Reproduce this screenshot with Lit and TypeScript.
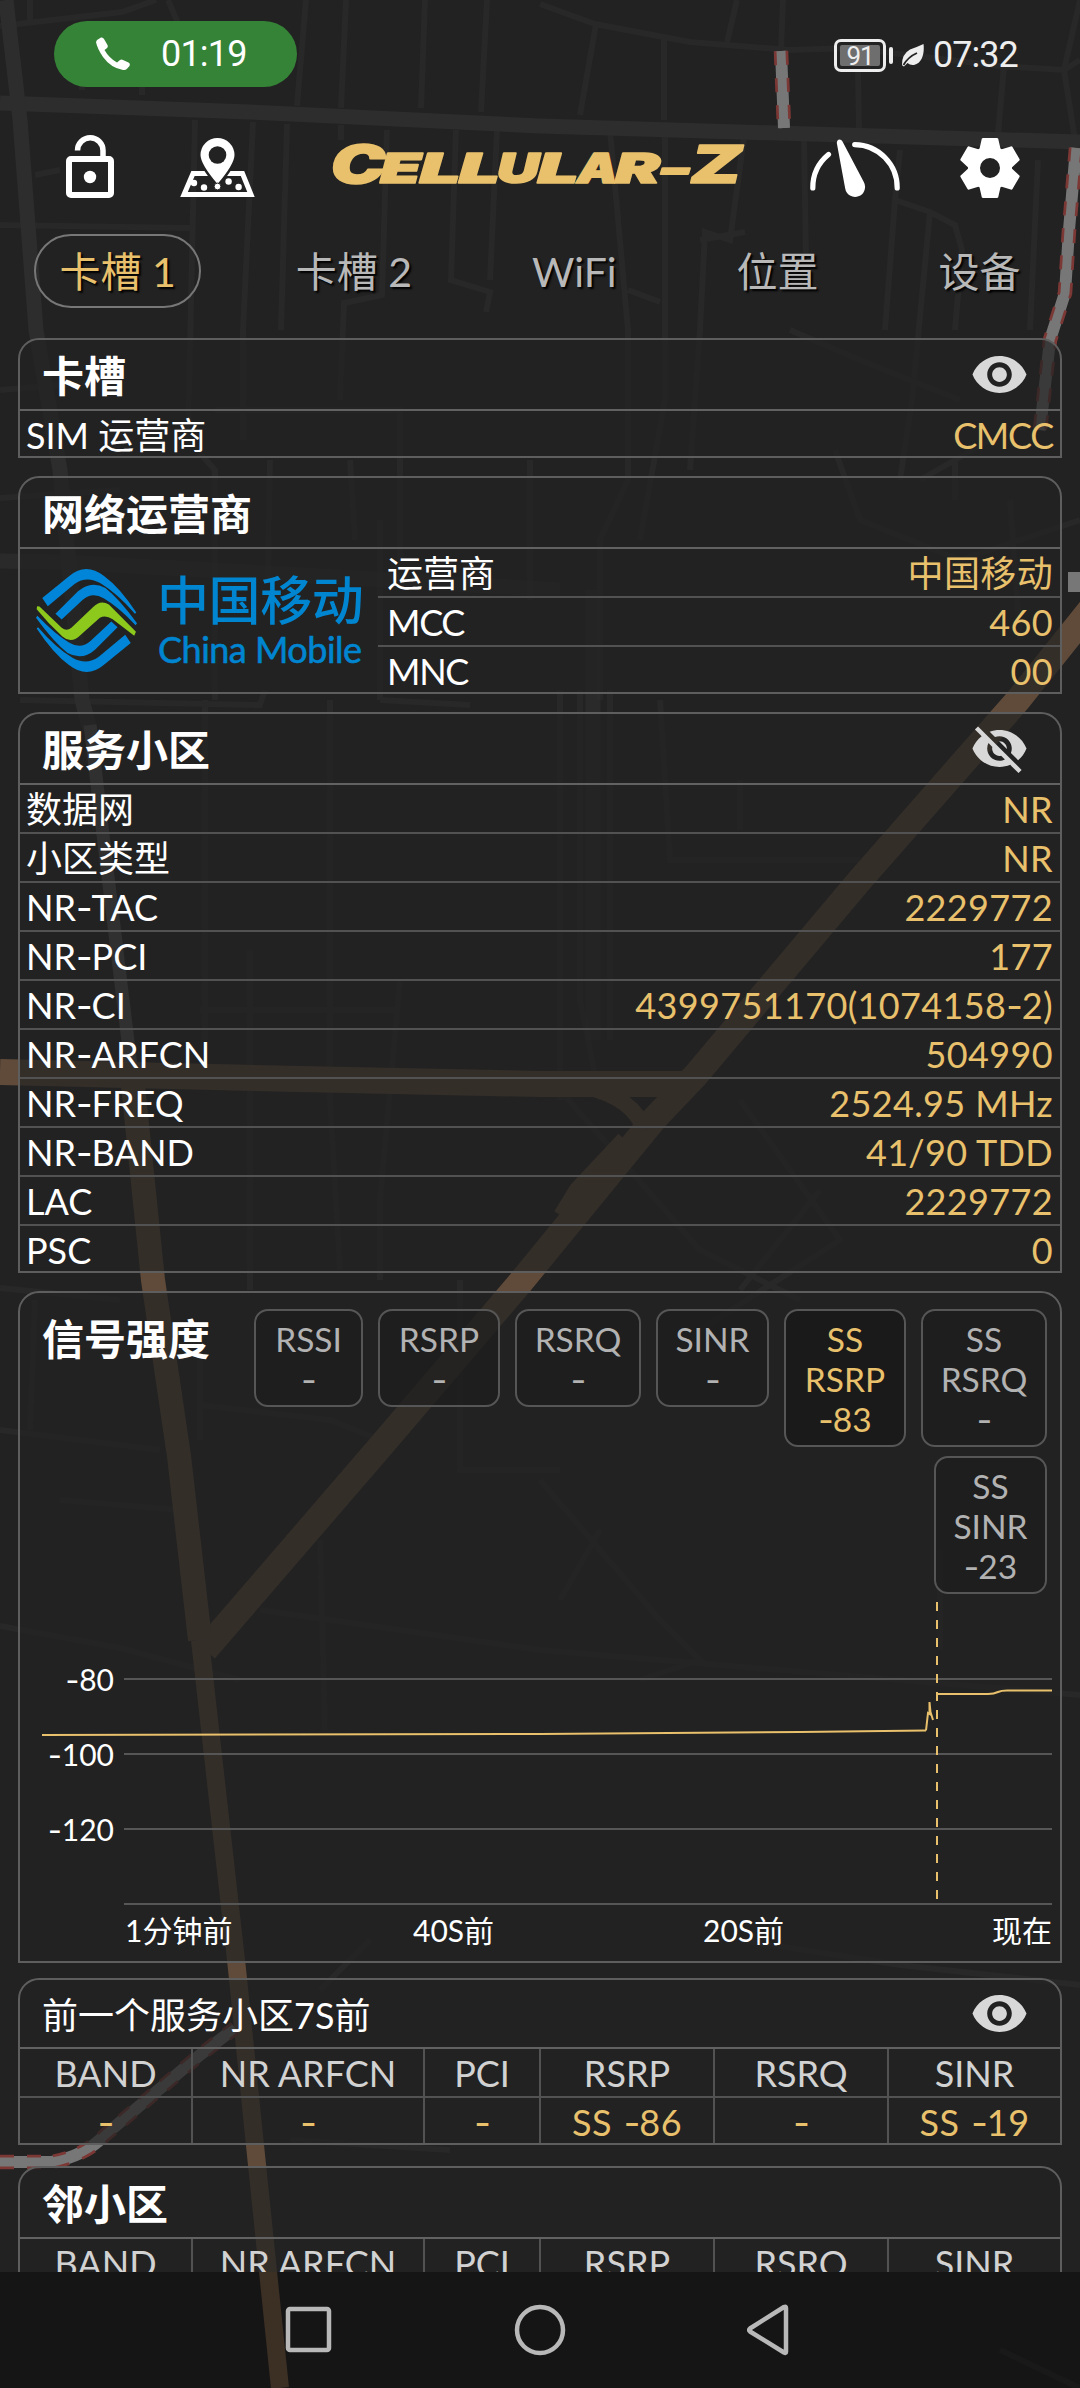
import { LitElement, html, svg, css, nothing } from 'lit';
import { customElement, property } from 'lit/decorators.js';
import { classMap } from 'lit/directives/class-map.js';
import { styleMap } from 'lit/directives/style-map.js';

const EYE = svg`<path d="M12 4.5C7 4.5 2.73 7.61 1 12c1.73 4.39 6 7.5 11 7.5s9.27-3.11 11-7.5c-1.73-4.39-6-7.5-11-7.5zM12 17c-2.76 0-5-2.24-5-5s2.24-5 5-5 5 2.24 5 5-2.24 5-5 5zm0-8c-1.66 0-3 1.34-3 3s1.34 3 3 3 3-1.34 3-3-1.34-3-3-3z"/>`;
const EYE_OFF = svg`<path d="M12 7c2.76 0 5 2.24 5 5 0 .65-.13 1.26-.36 1.83l2.92 2.92c1.51-1.26 2.7-2.89 3.43-4.75-1.73-4.39-6-7.5-11-7.5-1.4 0-2.74.25-3.98.7l2.16 2.16C10.74 7.13 11.35 7 12 7zM2 4.27l2.28 2.28.46.46C3.08 8.3 1.78 10.02 1 12c1.73 4.39 6 7.5 11 7.5 1.55 0 3.03-.3 4.38-.84l.42.42L19.73 22 21 20.73 3.27 3 2 4.27zM7.53 9.8l1.55 1.55c-.05.21-.08.43-.08.65 0 1.66 1.34 3 3 3 .22 0 .44-.03.65-.08l1.55 1.55c-.67.33-1.41.53-2.2.53-2.76 0-5-2.24-5-5 0-.79.2-1.53.53-2.2zm4.31-.78l3.15 3.15.02-.16c0-1.66-1.34-3-3-3l-.17.01z"/>`;

/* Hyphens are set in a face whose dash is longer and sits at mid-cap height. */
const dashed = (t: string) => t.split(/(-)/).map((p) => (p === '-' ? html`<span class="hy">-</span>` : p));

const shared = css`
  * { box-sizing: border-box; }
  svg { display: block; flex: none; }
  .hy { font-family: 'Inter', sans-serif; letter-spacing: -1px; }
`;

@customElement('map-backdrop')
class MapBackdrop extends LitElement {
  static styles = css`
    :host { display: block; }
    svg { display: block; width: 1080px; height: 2388px; }
    .minor { stroke: #282828; stroke-width: 6; fill: none; }
    .street { stroke: #2d2d2d; stroke-width: 15; fill: none; }
    .major { stroke: #604b3a; fill: none; }
    .rail { stroke: #777; stroke-width: 12; fill: none; }
    .tick { stroke: #7c3835; stroke-width: 14.5; stroke-dasharray: 14 13; fill: none; }
  `;
  private rail(d: string) {
    return svg`<path class="rail" d=${d}/><path class="tick" d=${d}/><path class="rail" d=${d} stroke-opacity="1" style="stroke-width:9"/>`;
  }
  render() {
    return html`<svg viewBox="0 0 1080 2388" aria-hidden="true">
      <g class="minor">
        <path d="M0 26L122 12L156 0M30 0V20M168 0L180 28M306 0L297 106M346 0L341 108M425 0L421 108M487 0L481 112M82 90V70M142 95V40L180 30M195 120L188 440L215 470V700M253 122L243 330V440M287 124L281 330M387 130L382 295L344 303L340 400M456 130L451 280L490 292L486 312M497 130L490 280M341 125V140"/>
        <path d="M540 4L595 24L690 42L790 50L850 48L1000 66L1064 70L1080 60M596 24L580 115M737 0L727 42M783 0L781 50M664 38V120M858 70L859 130M1004 66L998 134M1064 70L1075 140M1080 0L1064 70M610 130L628 330V480L600 540V700M665 130V400L640 540M745 130L730 240L705 232L700 330L690 470M745 232L700 240M804 140L806 260M900 150L895 200L930 212L955 225L962 250L955 330M930 212L912 400L900 480M1038 160L1030 330M628 290L660 302M895 200L885 330"/>
        <path d="M0 225L190 228M35 175L60 170M0 390L120 380M215 410H400V560M270 460L268 580M350 460L355 540M530 460V600M0 498L120 490M380 520V700M20 700L260 705L265 690M380 700L470 705M580 690V1000L600 1100M560 690V1100M610 690V1040M660 700L670 860H860M740 780V830M205 700V1040M330 700V1100L340 1270M250 950V1290M400 980L380 1200V1280M200 1010H400M790 330L860 360L960 400M835 450L860 520L960 560L1080 520M920 480L990 440M955 460V500M1010 500L1020 640"/>
        <path d="M560 1090L700 1250L800 1300M740 1100L840 1240L700 1330M820 1190L740 1290M0 1288L120 1300M35 1300L30 1430M0 1430L160 1450M60 1500L180 1510M200 1405L330 1420L380 1440M200 1440V1340M0 1626L120 1648L240 1680M260 1610L540 1650L1080 1695M320 1540L325 1730M460 1280V1470H560M540 1480L660 1620L700 1660L640 1680M600 1530L560 1600M320 1990L370 1940M740 1940L900 1965L1080 1985M940 1550V1650M290 2140L450 2150M1000 2350L1080 2388"/>
      </g>
      <g class="street">
        <path d="M0 103L250 112L540 126L1080 142"/>
        <path d="M6 0L20 120L36 330L60 470L82 700L90 730"/>
        <path d="M0 561L60 562L300 575L560 590" stroke-opacity=".8"/>
        <path d="M593 590V1040" stroke-opacity=".7"/>
      </g>
      <path d="M90 725L106 860L131 1066" stroke="#555253" stroke-width="13" fill="none"/>
      <g class="major">
        <path d="M1090 610L1018 700L860 880L695 1076L655 1118L520 1283L380 1447L205 1650" stroke-width="26"/>
        <path d="M625 1140L578 1190L562 1216" stroke-width="18"/>
        <path d="M0 1072L300 1079L540 1084H690" stroke-width="26"/>
        <path d="M590 1088Q632 1098 645 1130" stroke-width="16"/>
        <path d="M131 1066L153 1280L179 1456L200 1640" stroke-width="24"/>
        <path d="M200 1640L237 1969L256 2155L280 2388" stroke-width="18"/>
      </g>
      ${this.rail('M781 51L784 128')}
      ${this.rail('M1076 148L1069 230L1065 293L1050 340L1040 430')}
      ${this.rail('M0 2162H52Q85 2156 105 2135L200 2055L235 2028')}
      <rect x="1068" y="572" width="12" height="20" fill="#777"/>
    </svg>`;
  }
}

@customElement('status-bar')
class StatusBar extends LitElement {
  static styles = [shared, css`
    :host { display: flex; justify-content: space-between; align-items: flex-start; height: 108px; padding: 21px 60px 0 54px; font: 36px/66px 'Roboto', sans-serif; color: #fff; }
    .call { display: flex; align-items: center; width: 243px; height: 66px; padding-left: 42px; gap: 31px; border-radius: 33px; background: #358336; line-height: 70px; letter-spacing: -0.8px; }
    .right { display: flex; align-items: center; height: 68px; color: #eee; }
    .battery { display: flex; align-items: center; gap: 3px; margin-right: 9px; }
    .cell { width: 52px; height: 33px; padding: 3px; border: 3px solid #eee; border-radius: 7px; }
    .fill { width: 40px; height: 21px; border-radius: 2px; background: #6e6e6e; font-size: 26px; line-height: 22px; text-align: center; letter-spacing: -1px; }
    .nub { width: 4px; height: 17px; border-radius: 2px; background: #eee; }
    .time { margin-left: 9px; line-height: 70px; width: 87px; letter-spacing: -1px; white-space: nowrap; }
  `];
  render() {
    return html`
      <div class="call">
        <svg width="34" height="34" viewBox="0 0 34 34" fill="#fff"><path d="M1 3L5 .5Q7 0 8 2L11.500 8Q12.500 10 10.500 11.500L8.500 13Q13 21 21 25.500L24 23Q25.500 22 27 23L32.500 25.500Q34.500 26.500 33.500 29L31 31.800Q29.500 33.500 27 33Q15 31 7 20Q1 11 0 5Z"/></svg>
        <span>01:19</span>
      </div>
      <div class="right">
        <div class="battery"><div class="cell"><div class="fill">91</div></div><div class="nub"></div></div>
        <svg width="22" height="23" viewBox="0 0 22 23"><path d="M21.500 0C22.500 8 21 19 12 21Q8 21.500 5.500 19L2 22.500Q0 22 0 20.500Q0 10 8 5.500Q14 3.500 21.500 0Z" fill="#eee"/><path d="M1.500 21Q6 13 15 9" stroke="#222" stroke-width="1.800" fill="none"/></svg>
        <span class="time">07:32</span>
      </div>`;
  }
}

/* Wordmark letters: character, x position, advance, large cap or small cap. */
const WORDMARK: [string, number, number, boolean][] = [
  ['C', 32, 163, true], ['E', 181, 122, false], ['L', 299, 122, false], ['L', 417, 122, false], ['U', 531, 126, false],
  ['L', 653, 122, false], ['A', 771, 122, false], ['R', 886, 134, false], ['-', 1010, 110, false], ['Z', 1112, 152, true],
];

@customElement('app-header')
class AppHeader extends LitElement {
  static styles = [shared, css`
    :host { display: flex; align-items: center; height: 120px; padding: 0 60px 0 66px; }
    .lock { margin-top: -3px; }
    .map { margin-left: 66px; }
    .logo { margin: -6px 50px 0 65px; }
    .logo text { font: italic 900 124px 'Inter', sans-serif; fill: #e9c16c; stroke: #e9c16c; stroke-width: 5; stroke-linejoin: round; }
    .big { font-size: 155px; }
    .gear { margin-left: 60px; }
  `];
  render() {
    return html`
      <svg class="lock" width="48" height="63" viewBox="0 0 48 63" fill="none" stroke="#fff"><rect x="3" y="24" width="42" height="36" rx="2" stroke-width="6"/><path d="M11.500 15.500A12.700 12.700 0 0 1 37 15.500V23" stroke-width="5.500"/><circle cx="24" cy="42" r="6.200" fill="#fff" stroke="none"/></svg>
      <svg class="map" width="75" height="60" viewBox="0 0 75 60"><path d="M13 35.500H62.500L71 56.500H4Z" fill="none" stroke="#fff" stroke-width="5"/><g fill="#fff"><circle cx="14" cy="45" r="3.200"/><circle cx="24" cy="49.500" r="3.200"/><circle cx="48.600" cy="43.500" r="3.200"/><circle cx="58.600" cy="49" r="3.200"/></g><path d="M37.500 0A17 17 0 0 1 54.500 17Q54.500 26 37.500 46Q20.500 26 20.500 17A17 17 0 0 1 37.500 0Z" fill="#fff" stroke="#222" stroke-width="5" paint-order="stroke"/><circle cx="37.500" cy="17" r="8.800" fill="#222"/><circle cx="37.500" cy="48.500" r="3.400" fill="#fff" stroke="#222" stroke-width="1"/></svg>
      <svg class="logo" width="440" height="90" viewBox="0 0 1320 270">
        <text y="189">${WORDMARK.map(([c, x, w, big]) => svg`<tspan class=${big ? 'big' : 'small'} x=${x} textLength=${w} lengthAdjust="spacingAndGlyphs">${c}</tspan>`)}</text>
      </svg>
      <svg width="90" height="58" viewBox="0 0 90 58"><g fill="none" stroke="#fff" stroke-width="5.200" stroke-linecap="round"><path d="M2.800 49A43 43 0 0 1 18.500 15.500"/><path d="M44.700 5.600A43 43 0 0 1 87.200 49"/></g><path d="M26.800 4Q27 .5 29.500 .4Q31.500 .5 32.500 2.500L53.800 43A10 10 0 1 1 35.200 49.500Z" fill="#fff"/></svg>
      <svg class="gear" width="60" height="60" viewBox="-30 -30 60 60" fill="#fff">
        ${[0, 60, 120, 180, 240, 300].map((a) => svg`<path transform="rotate(${a})" d="M-7 -30H7Q8.500 -30 8.500 -28L11 -17H-11L-8.500 -28Q-8.500 -30 -7 -30Z"/>`)}
        <circle r="16" fill="none" stroke="#fff" stroke-width="12"/>
      </svg>`;
  }
}

@customElement('tab-strip')
class TabStrip extends LitElement {
  @property({ type: Array }) tabs: string[] = [];
  static styles = [shared, css`
    :host { display: flex; justify-content: space-between; margin-top: 6px; padding: 0 34px; font: 41px/78px 'Lato', 'Noto Sans CJK SC', sans-serif; color: #b8b8b8; text-shadow: 2px 2px 2px #000; }
    .tab { height: 74px; padding: 0 23.5px; border: 2px solid transparent; border-radius: 37px; line-height: 72px; white-space: nowrap; }
    .on { color: #e9c16c; border-color: #777; }
  `];
  render() {
    return this.tabs.map((t, i) => html`<div class=${classMap({ tab: true, on: i === 0 })}>${t}</div>`);
  }
}

const card = css`
  :host { display: block; color: #fff; font: 36px/46px 'Lato', 'Noto Sans CJK SC', sans-serif; }
  .card { border: 2px solid #5e5e5e; border-radius: 21px 21px 0 0; background: rgba(34, 34, 34, 0.72); }
  .head { display: flex; align-items: center; justify-content: space-between; height: 69px; padding: 2px 31px 0 22px; font-size: 42px; font-weight: 700; line-height: 60px; }
  .head svg { fill: #d8d8d8; margin-top: -2px; }
  .row { display: flex; justify-content: space-between; height: 49px; padding: 1px 7px 0 6px; border-top: 2px solid #525252; white-space: nowrap; }
  .row:first-child { border-color: #626262; }
  .row:last-child { height: 47px; }
  .val { color: #e9c16c; letter-spacing: 0.35px; }
  .tight { letter-spacing: -1.3px; }
`;

const eye = (off = false) => html`<svg width="59" height="59" viewBox="0 0 24 24">${off ? EYE_OFF : EYE}</svg>`;

type Row = [string, string, boolean?];

@customElement('info-card')
class InfoCard extends LitElement {
  @property() heading = '';
  @property() toggle = '';
  @property({ type: Array }) rows: Row[] = [];
  @property({ type: Boolean }) carrier = false;
  static styles = [shared, card, css`
    .body { display: flex; }
    .rows { flex: 1; }
    .brand { display: flex; align-items: center; width: 358px; gap: 20px; padding-left: 16px; border-top: 2px solid #626262; color: #0085d0; }
    .names { display: flex; flex-direction: column; white-space: nowrap; }
    .cn { font: 500 52px/56px 'Noto Sans CJK SC', sans-serif; letter-spacing: -0.4px; }
    .en { font: 400 36px/44px 'Lato', sans-serif; margin-top: 1px; padding-left: 1px; letter-spacing: -0.5px; -webkit-text-stroke: 0.6px #0085d0; }
    .inset .row { padding-left: 9px; }
  `];
  render() {
    return html`<div class="card">
      <div class="head"><span>${this.heading}</span>${this.toggle ? eye(this.toggle === 'off') : nothing}</div>
      <div class="body">
        ${this.carrier ? html`<div class="brand">
          <svg width="101" height="103" viewBox="104 745 291 310" preserveAspectRatio="none">
            ${[0, 180].map((a) => svg`<g transform="rotate(${a} 249.500 900)" fill="#0085d8"><path d="M122 832L200 766Q248 724 300 766Q345 800 393 876L389 880Q340 820 290 788Q250 764 215 790L138 857Z"/><path d="M160 880L225 812Q262 778 304 802Q345 836 395 908L391 914Q340 858 300 834Q266 812 238 838L178 897Z"/></g>`)}
            <path d="M107 857L114 858L178 922Q192 934 206 922L268 860Q290 836 314 852L392 934L387 946L325 896Q304 882 288 892L234 942Q206 972 180 948Q140 910 106 866Z" fill="#8dc91c"/>
          </svg>
          <div class="names"><span class="cn">中国移动</span><span class="en">China Mobile</span></div>
        </div>` : nothing}
        <div class=${classMap({ rows: true, inset: this.carrier })}>
          ${this.rows.map(([k, v, t]) => html`<div class="row"><span class=${classMap({ tight: !!t })}>${dashed(k)}</span><span class=${classMap({ val: true, tight: v === 'CMCC' })}>${dashed(v)}</span></div>`)}
        </div>
      </div>
    </div>`;
  }
}

@customElement('signal-card')
class SignalCard extends LitElement {
  static styles = [shared, card, css`
    .top { display: flex; justify-content: space-between; align-items: flex-start; padding: 16px 13px 0 22px; }
    .title { font-size: 42px; font-weight: 700; line-height: 60px; }
    .chips { display: flex; flex-wrap: wrap; justify-content: flex-end; align-items: flex-start; gap: 9px 15px; width: 810px; }
    .chip { padding: 8px 0 5px; border: 2px solid #565656; border-radius: 14px; background: rgba(28, 28, 28, 0.6); color: #b2b2b2; font-size: 33.5px; line-height: 40px; text-align: center; }
    .on { color: #e9c16c; background: #1a1a1a; }
    .plot text { font: 30px 'Lato', 'Noto Sans CJK SC', sans-serif; fill: #fff; }
    .hyt { font-family: 'Inter', sans-serif; }
    .grid { stroke: #565656; stroke-width: 2; }
    .line { fill: none; stroke: #e9c16c; stroke-width: 2; }
  `];
  private chips: [string[], number, boolean?][] = [
    [['RSSI', '-'], 109], [['RSRP', '-'], 122], [['RSRQ', '-'], 126], [['SINR', '-'], 113],
    [['SS', 'RSRP', '-83'], 122, true], [['SS', 'RSRQ', '-'], 126], [['SS', 'SINR', '-23'], 113],
  ];
  render() {
    return html`<div class="card">
      <div class="top">
        <span class="title">信号强度</span>
        <div class="chips">${this.chips.map(([ls, w, on]) => html`<div class=${classMap({ chip: true, on: !!on })} style=${styleMap({ width: w + 'px' })}>${ls.map((l) => html`<div>${dashed(l)}</div>`)}</div>`)}</div>
      </div>
      <svg class="plot" width="1040" height="367" viewBox="20 1592 1040 367">
        ${[1677, 1752, 1827, 1902].map((y) => svg`<path class="grid" d="M124 ${y}H1052"/>`)}
        ${([['80', 1677], ['100', 1752], ['120', 1827]] as [string, number][]).map(([t, y]) => svg`<text x="114" y=${y + 11.5} text-anchor="end"><tspan class="hyt">-</tspan>${t}</text>`)}
        <text x="125" y="1940">1分钟前</text><text x="413" y="1940">40S前</text><text x="703" y="1940">20S前</text><text x="1052" y="1940" text-anchor="end">现在</text>
        <path class="line" d="M42 1733L540 1732L800 1730L926 1728.500" stroke-width="1.600"/>
        <path class="line" d="M926 1728.500L928 1711L929.500 1712V1700L930.500 1710L933 1718"/>
        <path class="line" d="M937 1692H988Q994 1692 998 1690T1010 1688.500H1052"/>
        <path class="line" d="M937 1600V1902" stroke-dasharray="9 9"/>
      </svg>
    </div>`;
  }
}

@customElement('cell-table')
class CellTable extends LitElement {
  @property() heading = '';
  @property({ type: Boolean }) plain = false;
  @property({ type: Array }) values: string[] = [];
  static styles = [shared, card, css`
    .head.plain { height: 67px; font-size: 36px; font-weight: 400; }
    .line { display: grid; grid-template-columns: 171px 232px 116px 174px 174px 173px; border-top: 2px solid #626262; }
    .cell { height: 47px; padding-top: 1px; border-left: 2px solid #525252; text-align: center; color: #d2d2d2; white-space: nowrap; }
    .cell:first-child { border-left: 0; }
    .values { border-color: #525252; }
    .values .cell { height: 45px; color: #e9c16c; letter-spacing: 0.5px; word-spacing: 2px; }
  `];
  render() {
    return html`<div class="card">
      <div class=${classMap({ head: true, plain: this.plain })}><span>${this.heading}</span>${this.plain ? eye() : nothing}</div>
      <div class="line">${['BAND', 'NR ARFCN', 'PCI', 'RSRP', 'RSRQ', 'SINR'].map((h) => html`<div class="cell">${h}</div>`)}</div>
      ${this.values.length ? html`<div class="line values">${this.values.map((v) => html`<div class="cell">${dashed(v)}</div>`)}</div>` : nothing}
    </div>`;
  }
}

@customElement('nav-bar')
class NavBar extends LitElement {
  static styles = [shared, css`
    :host { display: flex; justify-content: center; align-items: center; gap: 181px; height: 116px; background: rgba(0, 0, 0, 0.37); }
    svg { fill: none; stroke: #b8b8b8; stroke-width: 4.5; stroke-linejoin: round; }
  `];
  render() {
    return html`
      <svg width="48" height="52" viewBox="0 0 48 52"><rect x="3" y="5" width="41" height="41" rx="2"/></svg>
      <svg width="52" height="52" viewBox="0 0 52 52"><circle cx="26" cy="26" r="23"/></svg>
      <svg width="48" height="52" viewBox="0 0 48 52"><path d="M39 4V48Q39 49.500 37 48.500L3 27.500Q1.500 26 3 24.500L37 3Q39 2 39 4Z"/></svg>`;
  }
}

@customElement('app-root')
class AppRoot extends LitElement {
  static styles = [shared, css`
    :host { display: block; position: relative; width: 1080px; height: 2388px; overflow: hidden; background: #222; }
    map-backdrop { position: absolute; inset: 0; }
    .screen { position: relative; display: flex; flex-direction: column; height: 2388px; }
    main { flex: 1; min-height: 0; overflow: hidden; display: flex; flex-direction: column; }
    main > *, .list > *, nav-bar { flex: none; }
    .list { display: flex; flex-direction: column; gap: 18px; padding: 30px 18px 0; }
    .prev { margin-top: -3px; }
    .near { margin-top: 3px; }
  `];
  render() {
    return html`
      <map-backdrop></map-backdrop>
      <div class="screen">
        <main>
          <status-bar></status-bar>
          <app-header></app-header>
          <tab-strip .tabs=${['卡槽 1', '卡槽 2', 'WiFi', '位置', '设备']}></tab-strip>
          <div class="list">
            <info-card heading="卡槽" toggle="on" .rows=${[['SIM 运营商', 'CMCC']]}></info-card>
            <info-card heading="网络运营商" carrier .rows=${[['运营商', '中国移动'], ['MCC', '460', true], ['MNC', '00', true]]}></info-card>
            <info-card heading="服务小区" toggle="off" .rows=${[
              ['数据网', 'NR'], ['小区类型', 'NR'], ['NR-TAC', '2229772'], ['NR-PCI', '177'], ['NR-CI', '4399751170(1074158-2)'],
              ['NR-ARFCN', '504990'], ['NR-FREQ', '2524.95 MHz'], ['NR-BAND', '41/90 TDD'], ['LAC', '2229772'], ['PSC', '0'],
            ]}></info-card>
            <signal-card></signal-card>
            <cell-table class="prev" plain heading="前一个服务小区7S前" .values=${['-', '-', '-', 'SS -86', '-', 'SS -19']}></cell-table>
            <cell-table class="near" heading="邻小区"></cell-table>
          </div>
        </main>
        <nav-bar></nav-bar>
      </div>`;
  }
}
